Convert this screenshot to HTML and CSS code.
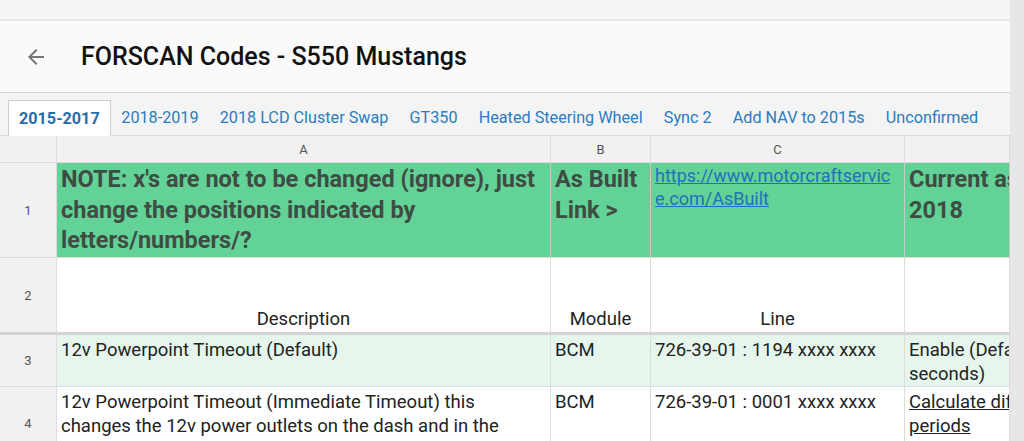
FILE: index.html
```html
<!DOCTYPE html>
<html>
<head>
<meta charset="utf-8">
<link rel="stylesheet" href="styles.css">
</head>
<body>
<div class="screen">
  <div class="main">
    <div class="status"></div>
    <header class="appbar">
      <svg class="back" width="24" height="24" viewBox="0 0 24 24"><path d="M20 11H7.83l5.59-5.59L12 4l-8 8 8 8 1.41-1.41L7.83 13H20v-2z" fill="#757575"/></svg>
      <h1 class="title">FORSCAN Codes - S550 Mustangs</h1>
    </header>
    <nav class="tabs">
      <span class="tab active">2015-2017</span>
      <span class="tab">2018-2019</span>
      <span class="tab">2018 LCD Cluster Swap</span>
      <span class="tab">GT350</span>
      <span class="tab">Heated Steering Wheel</span>
      <span class="tab">Sync 2</span>
      <span class="tab">Add NAV to 2015s</span>
      <span class="tab">Unconfirmed</span>
    </nav>
    <div class="sheet">
      <div class="ch corner"></div>
      <div class="ch">A</div>
      <div class="ch">B</div>
      <div class="ch">C</div>
      <div class="ch"></div>

      <div class="rh">1</div>
      <div class="c g bold">NOTE: x's are not to be changed (ignore), just change the positions indicated by letters/numbers/?</div>
      <div class="c g bold">As Built Link &gt;</div>
      <div class="c g link"><a>https://www.motorcraftservice.com/AsBuilt</a></div>
      <div class="c g bold clip">Current as of<br>2018</div>

      <div class="rh r2">2</div>
      <div class="c hd">Description</div>
      <div class="c hd">Module</div>
      <div class="c hd">Line</div>
      <div class="c hd"></div>

      <div class="rh">3</div>
      <div class="c lg">12v Powerpoint Timeout (Default)</div>
      <div class="c lg">BCM</div>
      <div class="c lg">726-39-01 : 1194 xxxx xxxx</div>
      <div class="c lg clip">Enable (Default 10<br>seconds)</div>

      <div class="rh">4</div>
      <div class="c">12v Powerpoint Timeout (Immediate Timeout) this changes the 12v power outlets on the dash and in the</div>
      <div class="c">BCM</div>
      <div class="c">726-39-01 : 0001 xxxx xxxx</div>
      <div class="c clip"><u>Calculate different</u><br><u>periods</u></div>
    </div>
  </div>
  <div class="scroll"></div>
</div>
</body>
</html>
```

FILE: styles.css
```css
* { box-sizing: border-box; }
html, body { margin: 0; padding: 0; }
body {
  width: 1024px;
  height: 441px;
  overflow: hidden;
  font-family: Roboto, "Liberation Sans", sans-serif;
  background: #fafafa;
}
.screen { display: flex; height: 441px; }
.main { width: 1010px; display: flex; flex-direction: column; overflow: hidden; }
.scroll { width: 14px; background: #e7e7e7; }

.status {
  height: 21px;
  background: #f5f5f5;
  border-bottom: 2px solid #e9e9e9;
  flex: none;
}
.appbar {
  height: 72px;
  flex: none;
  background: #fafafa;
  border-bottom: 1px solid #d6d6d6;
  display: flex;
  align-items: center;
  padding-left: 24px;
}
.back { flex: none; }
.title {
  margin: 0 0 0 33px;
  font-size: 25px;
  font-weight: 500;
  color: #111;
}
.tabs {
  height: 43px;
  flex: none;
  background: #f4f4f4;
  border-bottom: 1px solid #d9d9d9;
  display: flex;
  align-items: flex-end;
  padding-left: 8px;
}
.tab {
  font-size: 16.2px;
  color: #2b7cc0;
  padding: 0 10.6px;
  height: 35px;
  display: flex;
  align-items: center;
  white-space: nowrap;
}
.tab.active {
  background: #fff;
  border: 1px solid #cfcfcf;
  border-bottom: none;
  color: #1f6eab;
  font-weight: 700;
  margin-bottom: -1px;
  height: 36px;
  padding: 0 10px;
}

.sheet {
  display: grid;
  grid-template-columns: 57px 494px 100px 254px 105px;
  grid-template-rows: 27px 95px 77px 52px 74px;
  flex: 1;
  overflow: hidden;
  background: #fff;
}
.ch, .rh {
  background: #f1f1f1;
  border-right: 1px solid #dcdcdc;
  border-bottom: 1px solid #dcdcdc;
  font-size: 13px;
  color: #555;
  display: flex;
  align-items: center;
  justify-content: center;
}
.c {
  border-right: 1px solid #dcdcdc;
  border-bottom: 1px solid #dcdcdc;
  padding: 3px 4px 0;
  font-size: 18.5px;
  line-height: 24px;
  color: #222;
  overflow: hidden;
}
.clip { white-space: nowrap; }
.g { background: #62d296; border-right-color: #c8c8c8; }
.bold {
  font-weight: 700;
  font-size: 23.5px;
  line-height: 30.5px;
  color: #3f4c44;
  padding-top: 1px;
}
.link { font-size: 18px; line-height: 23px; padding-top: 1px; }
.link a { color: #1f72b8; text-decoration: underline; word-break: break-all; }
.hd {
  display: flex;
  align-items: flex-end;
  justify-content: center;
  padding-bottom: 1px;
  border-bottom: 3px solid #d4d4d4;
}
.r2 { border-bottom: 3px solid #d4d4d4; }
.lg { background: #e6f6ec; }
```
